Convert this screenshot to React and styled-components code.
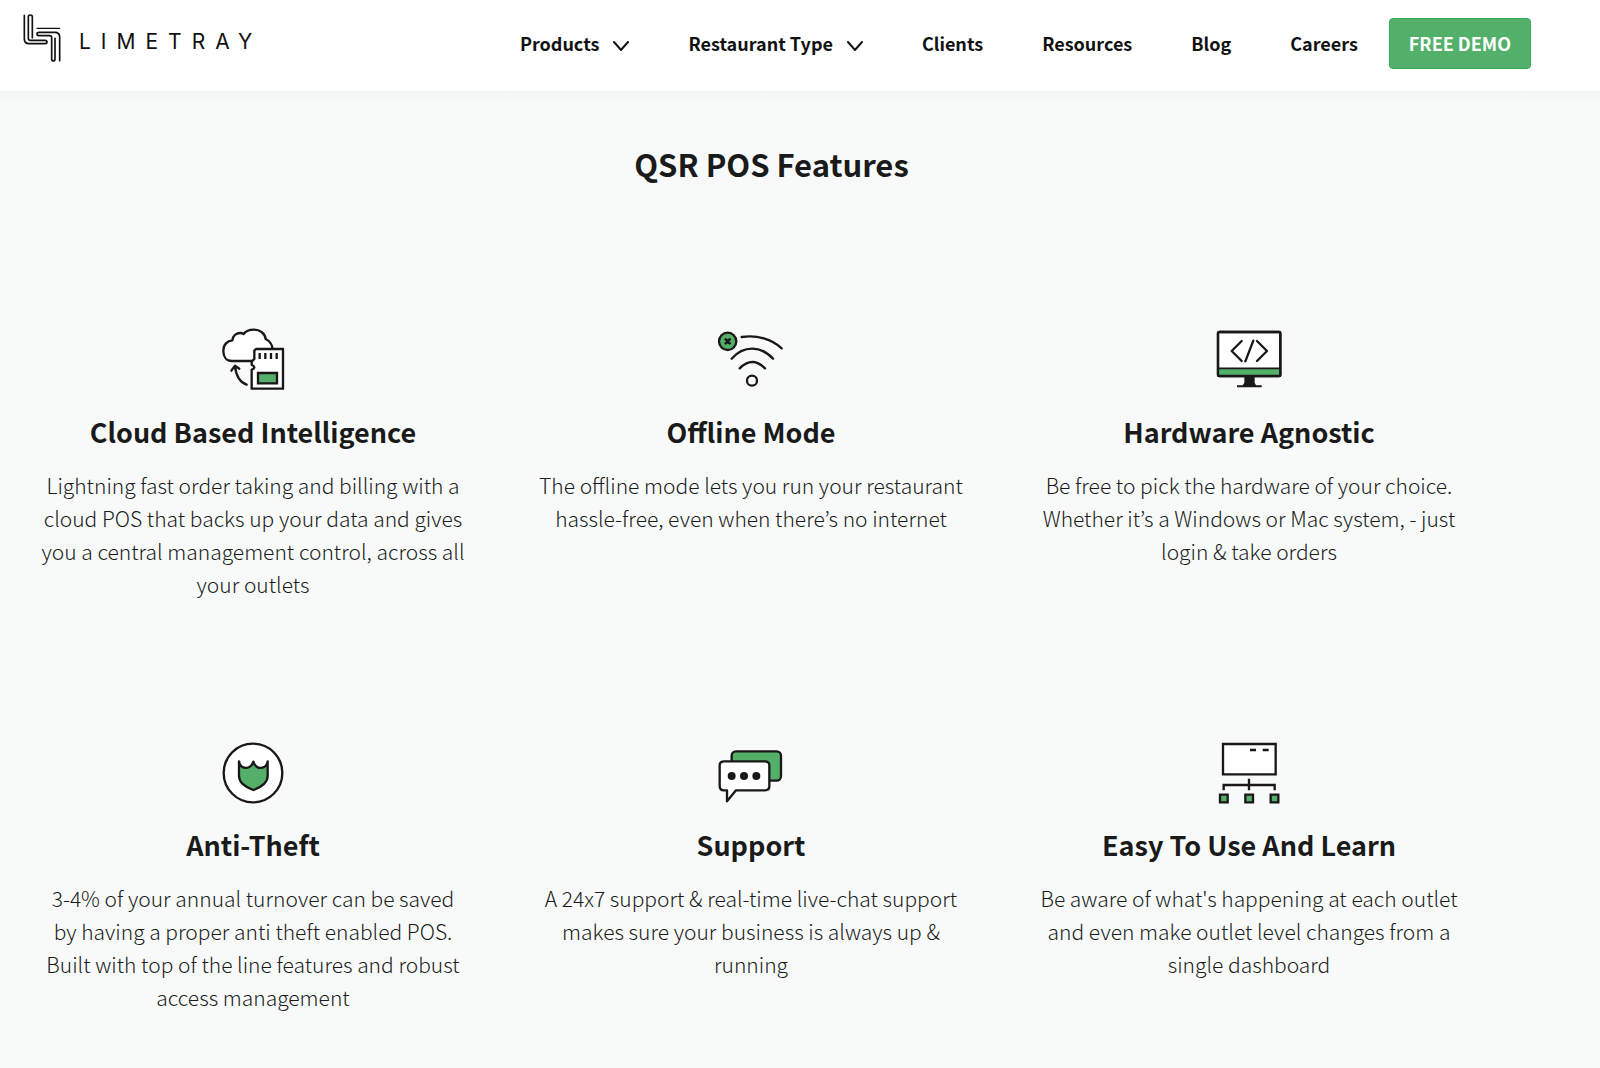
import React from "react";
import styled, { createGlobalStyle } from "styled-components";

const GlobalStyle = createGlobalStyle`
  *, *::before, *::after { box-sizing: border-box; }
  body {
    margin: 0;
    background: #f7faf9;
    font-family: "Noto Sans CJK KR", "Open Sans", sans-serif;
    color: #1a1a1a;
  }
`;

const Header = styled.header`
  display: flex;
  align-items: flex-start;
  justify-content: space-between;
  padding: 14px 69px 22px 23px;
  background: #fff;
`;

const Logo = styled.a`
  display: flex;
  align-items: flex-end;
  gap: 18px;
  color: #111;
  text-decoration: none;
`;

const LogoMark = styled.svg`
  width: 38px;
  height: 48px;
  fill: none;
  stroke: #111;
  stroke-width: 5;
  stroke-linecap: round;
`;

const LogoName = styled.span`
  font: 400 21px/40px Inter, sans-serif;
  letter-spacing: 10px;
`;

const Menu = styled.div`
  display: flex;
  align-items: center;
  gap: 31px;
  padding-top: 4px;
`;

const Nav = styled.nav`
  display: flex;
  align-items: center;
  gap: 59px;
`;

const NavLink = styled.a`
  display: flex;
  align-items: center;
  gap: 14px;
  font-size: 18px;
  line-height: 29px;
  font-weight: 600;
  color: #111;
  text-decoration: none;
  white-space: nowrap;
`;

const Chevron = styled.svg`
  width: 16px;
  height: 10px;
  margin-top: 4px;
  fill: none;
  stroke: #111;
  stroke-width: 2;
  stroke-linecap: round;
`;

const DemoButton = styled.button`
  padding: 10px 19px;
  border: 1px solid #35ab5a;
  border-radius: 4px;
  background: #52b06b;
  color: #fff;
  font: inherit;
  font-size: 18px;
  line-height: 29px;
  font-weight: 700;
  white-space: nowrap;
`;

const Features = styled.main`
  padding: 49px 57px 48px 0;
  background: linear-gradient(#f3f6f6, #f7faf9 14px);
`;

const Heading = styled.h1`
  margin: 0 0 139px;
  font-size: 31px;
  line-height: 48px;
  font-weight: 600;
  text-align: center;
`;

const Grid = styled.div`
  display: grid;
  grid-template-columns: repeat(3, 1fr);
  row-gap: 139px;
  padding: 0 45px 0 4px;
`;

const Card = styled.article`
  display: flex;
  flex-direction: column;
  align-items: center;
  padding: 0 35px;
  text-align: center;
`;

const Icon = styled.svg`
  width: 64px;
  height: 64px;
  overflow: visible;
  fill: none;
  stroke: #1b1718;
  stroke-width: 7;
  stroke-linecap: round;
  stroke-linejoin: round;
`;

const CardTitle = styled.h2`
  margin: 21px 0 17px;
  font-size: 27px;
  line-height: 40px;
  font-weight: 600;
`;

const CardText = styled.p`
  margin: 0;
  font-size: 21px;
  line-height: 33px;
  font-weight: 300;
`;

const GREEN = "#54b069";

const CloudIcon = () => (
  <Icon viewBox="46 36 192 192" aria-hidden="true">
    <path
      fill="#fff"
      d="M150 138H78C62 138 53 125 53 107C53 89 65 77 80 76C82 62 92 54 104 54Q110 54 114 57C120 48 132 44 145 44C163 44 178 55 180 72C192 78 199 86 201 102"
    />
    <path fill="#fff" d="M151 102H232V221H138V164C148 161 149 155 138 149V140L146 132V107Z" />
    <path strokeLinecap="butt" d="M162 114V132M179 114V132M196 114V132M213 114V132" />
    <path fill={GREEN} strokeLinejoin="miter" d="M157 174H214V205H157Z" />
    <path d="M123 209C104 203 92 185 88 155M77 167L88 152L101 161" />
  </Icon>
);

const OfflineIcon = () => (
  <Icon viewBox="56 36 192 192" aria-hidden="true">
    <circle cx="82" cy="79" r="26" fill={GREEN} />
    <path strokeWidth="8" d="M76 73L88 85M88 73L76 85" />
    <path d="M124 66C170 59 215 72 244 100M94 131Q120 101 156 101Q190 101 218 131M118 160Q156 122 194 160" />
    <circle cx="155" cy="197" r="15" fill="#fff" />
  </Icon>
);

const HardwareIcon = () => (
  <Icon viewBox="51 36 192 192" aria-hidden="true">
    <rect x="54" y="51" width="187" height="132" rx="4" fill="#fff" />
    <path stroke="none" fill={GREEN} d="M57 160H238V180H57Z" />
    <rect x="54" y="51" width="187" height="132" rx="4" />
    <path strokeWidth="5" d="M55 160H240" />
    <path stroke="none" fill="#1b1718" d="M133 184H164V203L168 211H185V217H111V211H128L133 203Z" />
    <path d="M125 78L95 108L125 138M160 77L136 139M171 78L201 108L171 138" />
  </Icon>
);

const ShieldIcon = () => (
  <Icon viewBox="46 30 192 192" aria-hidden="true">
    <circle cx="142" cy="129" r="88" fill="#fff" />
    <path
      fill={GREEN}
      d="M100 94C104 118 134 122 143 95C152 122 182 118 186 94V138C186 158 167 171 143 180C119 171 100 158 100 138Z"
    />
  </Icon>
);

const SupportIcon = () => (
  <Icon viewBox="56 30 192 192" aria-hidden="true">
    <rect x="94" y="64" width="148" height="88" rx="13" fill={GREEN} />
    <path
      fill="#fff"
      d="M71 94H194Q207 94 207 106V169Q207 181 194 181H107L80 214V181H71Q58 181 58 168V106Q58 94 71 94Z"
    />
    <g fill="#1b1718" stroke="none">
      <circle cx="94" cy="138" r="12" />
      <circle cx="131" cy="138" r="12" />
      <circle cx="168" cy="138" r="12" />
    </g>
  </Icon>
);

const NetworkIcon = () => (
  <Icon viewBox="51 30 192 192" aria-hidden="true">
    <g strokeLinecap="butt" strokeLinejoin="miter">
      <path fill="#fff" d="M69 42H227V133H69Z" />
      <path d="M150 60H168M188 60H206" />
      <path d="M147 146V181M71 181V165H224V181" />
      <path fill={GREEN} d="M60 194H83V217H60ZM136 194H159V217H136ZM212 194H235V217H212Z" />
    </g>
  </Icon>
);

const navItems = [
  { label: "Products", menu: true },
  { label: "Restaurant Type", menu: true },
  { label: "Clients" },
  { label: "Resources" },
  { label: "Blog" },
  { label: "Careers" },
];

const features = [
  {
    title: "Cloud Based Intelligence",
    icon: CloudIcon,
    text: "Lightning fast order taking and billing with a cloud POS that backs up your data and gives you a central management control, across all your outlets",
  },
  {
    title: "Offline Mode",
    icon: OfflineIcon,
    text: "The offline mode lets you run your restaurant hassle-free, even when there’s no internet",
  },
  {
    title: "Hardware Agnostic",
    icon: HardwareIcon,
    text: "Be free to pick the hardware of your choice. Whether it’s a Windows or Mac system, - just login & take orders",
  },
  {
    title: "Anti-Theft",
    icon: ShieldIcon,
    text: "3-4% of your annual turnover can be saved by having a proper anti theft enabled POS. Built with top of the line features and robust access management",
  },
  {
    title: "Support",
    icon: SupportIcon,
    text: "A 24x7 support & real-time live-chat support makes sure your business is always up & running",
  },
  {
    title: "Easy To Use And Learn",
    icon: NetworkIcon,
    text: "Be aware of what's happening at each outlet and even make outlet level changes from a single dashboard",
  },
];

export default function App() {
  return (
    <>
      <GlobalStyle />
      <Header>
        <Logo href="#">
          <LogoMark viewBox="70 41 114 144" aria-hidden="true">
            <path d="M74 45V116Q74 130 88 130H136Q142 130 142 125Q142 120 136 120H92Q86 120 86 114V50Q86 44 92 44Q98 44 98 50V112" />
            <path d="M180 181V110Q180 96 166 96H118Q112 96 112 101Q112 106 118 106H150Q156 106 156 112V176Q156 182 161 182Q166 182 166 176V114" />
            <path strokeWidth="4" d="M112 84H180" />
          </LogoMark>
          <LogoName>LIMETRAY</LogoName>
        </Logo>
        <Menu>
          <Nav>
            {navItems.map((item) => (
              <NavLink key={item.label} href="#">
                {item.label}
                {item.menu && (
                  <Chevron viewBox="0 0 16 10" aria-hidden="true">
                    <path d="M1 1L8 9L15 1" />
                  </Chevron>
                )}
              </NavLink>
            ))}
          </Nav>
          <DemoButton type="button">FREE DEMO</DemoButton>
        </Menu>
      </Header>
      <Features>
        <Heading>QSR POS Features</Heading>
        <Grid>
          {features.map(({ title, icon: FeatureIcon, text }) => (
            <Card key={title}>
              <FeatureIcon />
              <CardTitle>{title}</CardTitle>
              <CardText>{text}</CardText>
            </Card>
          ))}
        </Grid>
      </Features>
    </>
  );
}
